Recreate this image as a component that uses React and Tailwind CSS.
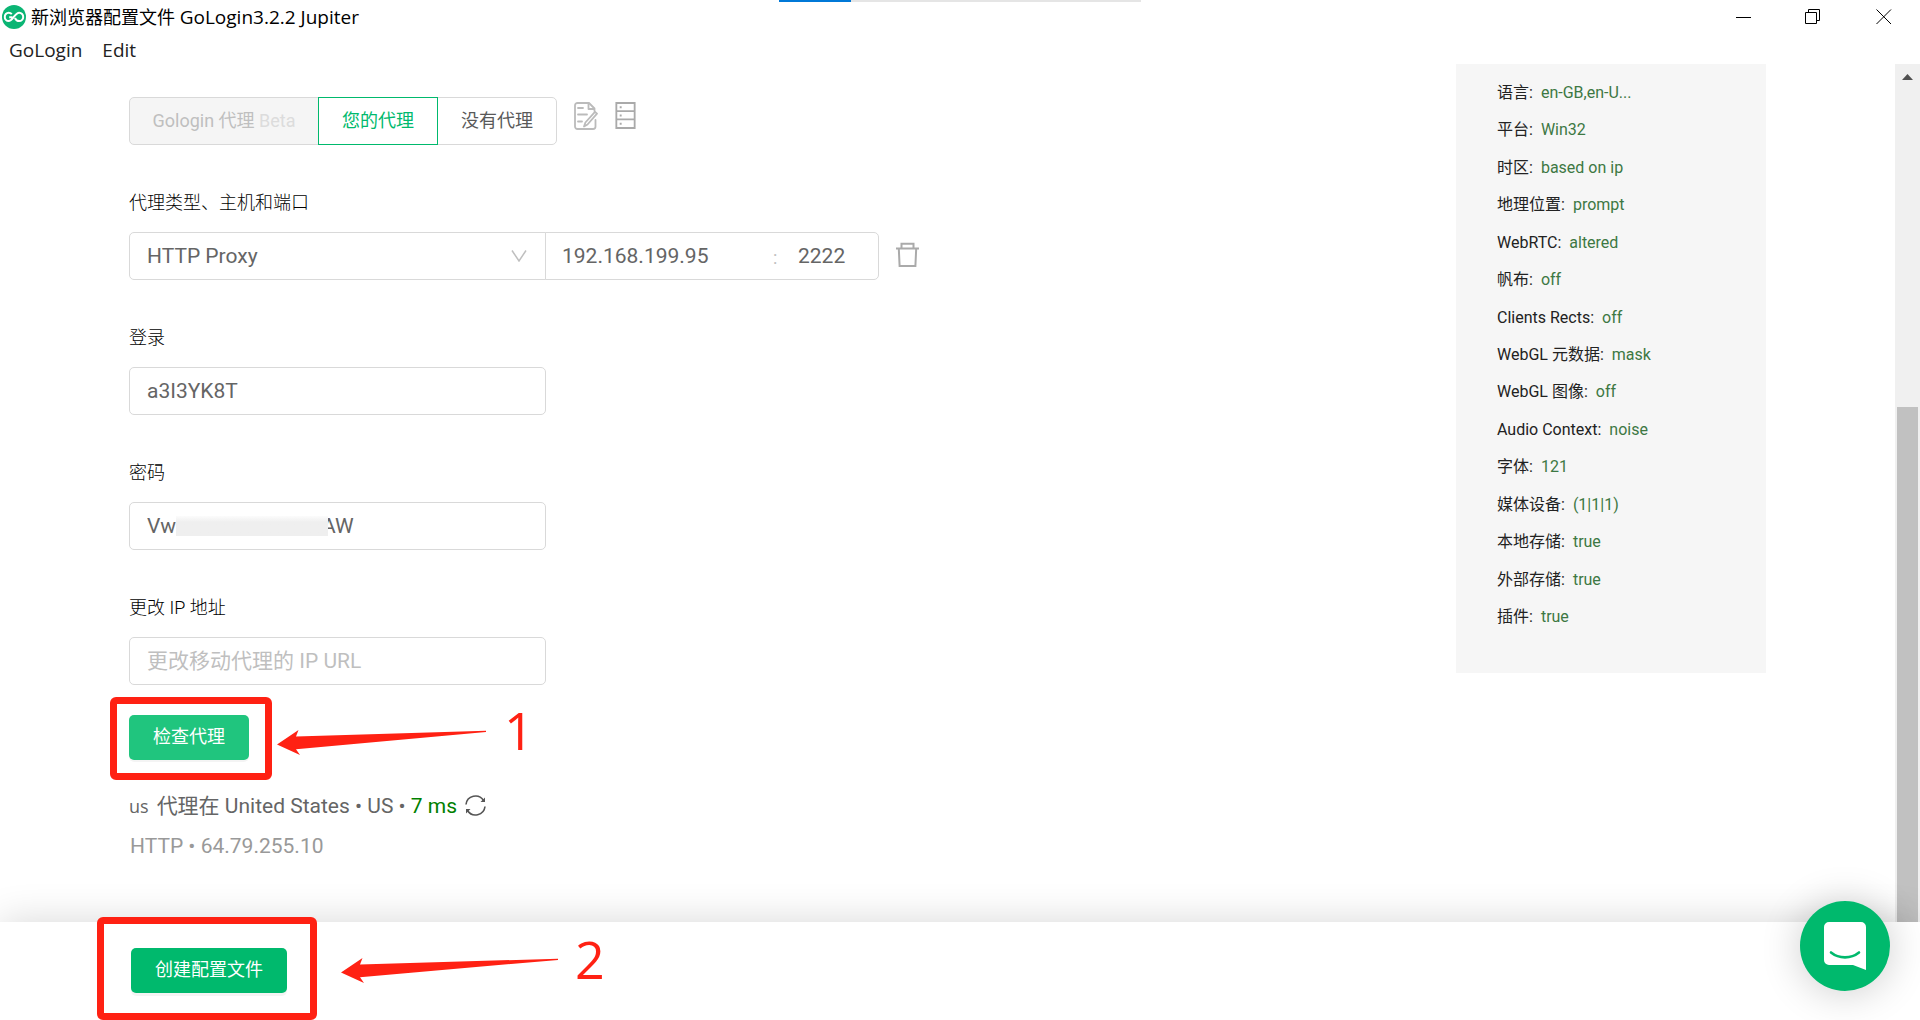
import { useState } from "react";

const params = [
  ["语言", "en-GB,en-U..."],
  ["平台", "Win32"],
  ["时区", "based on ip"],
  ["地理位置", "prompt"],
  ["WebRTC", "altered"],
  ["帆布", "off"],
  ["Clients Rects", "off"],
  ["WebGL 元数据", "mask"],
  ["WebGL 图像", "off"],
  ["Audio Context", "noise"],
  ["字体", "121"],
  ["媒体设备", "(1|1|1)"],
  ["本地存储", "true"],
  ["外部存储", "true"],
  ["插件", "true"],
];

const inputClass =
  "h-12 w-full rounded-[5px] border border-[#d9d9d9] bg-white px-[17px] text-[21px] text-[#656565] outline-none placeholder:text-[#bfbfbf]";

function TitleBar() {
  return (
    <header className="relative font-['Open_Sans','Noto_Sans_CJK_SC',sans-serif] text-[18px] text-black">
      {/* Loading line */}
      <div className="absolute top-0 left-[779px] flex h-[2px] w-[362px] bg-[#e5e5e5]">
        <div className="w-1/5 bg-[#0078d7]" />
      </div>

      <div className="flex h-[34px] items-center justify-between pl-[2px]">
        <div className="flex items-center gap-[5px]">
          <svg className="size-6" viewBox="0 0 24 24" fill="none">
            <circle cx="12" cy="12" r="12" fill="#0bb574" />
            <path
              d="M9.8 9.2C8.9 8.2 7.9 7.8 6.7 7.8A3.9 3.9 0 0 0 2.8 12a3.9 3.9 0 0 0 3.9 4.1c3.8 0 6.200-8.300 10.500-8.300a4 4 0 0 1 4 4.200 4 4 0 0 1-4 4.100c-2.300 0-3.700-1.800-4.300-3.100M7.200 12.200h3.200"
              stroke="#fff"
              strokeWidth="2"
            />
          </svg>
          <h1>
            新浏览器配置文件 <span className="text-[19px]">GoLogin3.2.2 Jupiter</span>
          </h1>
        </div>
        <div className="flex gap-[53px] pr-[28px]">
          <button type="button" aria-label="Minimize">
            <svg className="size-4" viewBox="0 0 16 16" stroke="#000" fill="none">
              <path d="M0 8.500h15" />
            </svg>
          </button>
          <button type="button" aria-label="Restore">
            <svg className="size-4" viewBox="0 0 16 16" stroke="#000" fill="none">
              <path d="M.5 3.500h11v11H.5zM3.500 3.500v-3h11v11h-3" />
            </svg>
          </button>
          <button type="button" aria-label="Close">
            <svg className="ml-[2px] size-4" viewBox="0 0 16 16" stroke="#000" fill="none">
              <path d="M.5.5l14.500 14.500M15 .5L.5 15" />
            </svg>
          </button>
        </div>
      </div>

      <nav className="flex h-[30px] items-center gap-5 pt-[2px] pl-[9px] text-[19px] text-[#222]">
        <button type="button">GoLogin</button>
        <button type="button">Edit</button>
      </nav>
    </header>
  );
}

function Arrow({ length, className }) {
  return (
    <svg
      className={className}
      width={length}
      height="25"
      viewBox={`0 0 ${length} 25`}
      fill="#ff2113"
    >
      <path d={`M0 14.500L21.500 0l-2.500 6.500L${length} .7v1.200L19 19.300 23 25z`} />
    </svg>
  );
}

function Field({ id, label, children }) {
  return (
    <div className="flex flex-col gap-[14px]">
      <label htmlFor={id} className="text-[18px] leading-[30px] font-light text-black">
        {label}
      </label>
      {children}
    </div>
  );
}

function ProxyTabs() {
  const [tab, setTab] = useState("own");
  const active = "border-[#00b96d] text-[#00b96d] z-10";
  const idle = "border-[#d9d9d9] text-[#595959]";

  return (
    <div className="flex items-start">
      <div className="flex h-12 text-[18px]">
        <button
          type="button"
          disabled
          className="w-[190px] rounded-l-[5px] border border-[#d9d9d9] bg-[#f5f5f5] pb-[2px] text-[#bfbfbf]"
        >
          Gologin 代理 <span className="text-[#dcdcdc]">Beta</span>
        </button>
        <button
          type="button"
          onClick={() => setTab("own")}
          className={`relative -ml-px w-[120px] border pb-[2px] ${tab === "own" ? active : idle}`}
        >
          您的代理
        </button>
        <button
          type="button"
          onClick={() => setTab("none")}
          className={`relative -ml-px w-[120px] rounded-r-[5px] border pb-[2px] ${tab === "none" ? active : idle}`}
        >
          没有代理
        </button>
      </div>

      <button type="button" aria-label="Edit proxies" className="mt-[5px] ml-[17px]">
        <svg className="h-7 w-6" viewBox="0 0 24 28" fill="none" stroke="#bbb" strokeWidth="1.800" strokeLinejoin="round" strokeLinecap="round">
          <path d="M20.500 9V6.500L15 1H3.500A2.500 2.500 0 0 0 1 3.500v21A2.500 2.500 0 0 0 3.500 27h15.500a2.500 2.500 0 0 0 2.500-2.500V18" />
          <path d="M14.500 1.500V7h5.500M4 6h5M4 12.500h9M4 19.500h4" />
          <path d="M21 9.800l2 1.900L13.500 22.500l-3.500 2 1.400-4z" />
        </svg>
      </button>
      <button type="button" aria-label="Proxy list" className="mt-[5px] ml-[17px]">
        <svg className="h-[27px] w-[21px]" viewBox="0 0 21 28" fill="none" stroke="#aaa" strokeWidth="1.900">
          <path d="M1 1h19v26H1zM1 9.500h19M1 18h19" />
          <path d="M4.500 5.500h2M4.500 14h2M4.500 22.500h2" strokeWidth="2" />
        </svg>
      </button>
    </div>
  );
}

function ProxyForm() {
  const [type, setType] = useState("http");
  const [host, setHost] = useState("192.168.199.95");
  const [port, setPort] = useState("2222");
  const [login, setLogin] = useState("a3I3YK8T");
  const [password, setPassword] = useState("Vw" + "\u00a0".repeat(28) + "AW");
  const [changeUrl, setChangeUrl] = useState("");

  return (
    <form className="pt-[33px]" onSubmit={(e) => e.preventDefault()}>
      <div className="flex flex-col gap-[43px]">
        <ProxyTabs />

        <Field id="proxy-type" label="代理类型、主机和端口">
          <div className="flex items-center">
            <div className="relative w-[417px]">
              <select
                id="proxy-type"
                value={type}
                onChange={(e) => setType(e.target.value)}
                className={`${inputClass} appearance-none rounded-r-none pt-[2px]`}
              >
                <option value="http">HTTP Proxy</option>
                <option value="socks5">Socks 5 Proxy</option>
              </select>
              <svg className="pointer-events-none absolute top-[18px] right-[19px] h-3 w-4" viewBox="0 0 16 12" fill="none" stroke="#bfbfbf" strokeWidth="1.500">
                <path d="M1 .5l7 10.500 7-10.500" />
              </svg>
            </div>
            <div className="-ml-px flex h-12 w-[334px] items-center rounded-r-[5px] border border-[#d9d9d9] pt-[2px] text-[21px] text-[#656565]">
              <input
                aria-label="Host"
                value={host}
                onChange={(e) => setHost(e.target.value)}
                className="w-[227px] pl-4 outline-none"
              />
              <span className="w-[25px] text-[18px] text-[#bfbfbf]">:</span>
              <input
                aria-label="Port"
                value={port}
                onChange={(e) => setPort(e.target.value)}
                className="w-[70px] outline-none"
              />
            </div>
            <button type="button" aria-label="Delete proxy" className="ml-[17px] pb-[2px]">
              <svg className="h-[26px] w-6" viewBox="0 0 24 26" fill="none" stroke="#aaa" strokeWidth="2">
                <path d="M0 6.500h23M5.500 6.500V1.800h12v4.700M2.800 6.500l.8 17.500h15.800l.8-17.500" />
              </svg>
            </button>
          </div>
        </Field>

        <Field id="login" label="登录">
          <div className="w-[417px]">
            <input id="login" value={login} onChange={(e) => setLogin(e.target.value)} className={inputClass} />
          </div>
        </Field>

        <Field id="password" label="密码">
          <div className="relative w-[417px]">
            <input id="password" value={password} onChange={(e) => setPassword(e.target.value)} className={inputClass} />
            {/* Hidden middle part */}
            <div className="pointer-events-none absolute top-[14px] left-[47px] h-5 w-[152px] bg-linear-to-b from-[#fcfcfc] to-[#efefef] to-30%" />
          </div>
        </Field>

        <Field id="change-url" label="更改 IP 地址">
          <div className="w-[417px]">
            <input
              id="change-url"
              placeholder="更改移动代理的 IP URL"
              value={changeUrl}
              onChange={(e) => setChangeUrl(e.target.value)}
              className={inputClass}
            />
          </div>
        </Field>
      </div>

      {/* Check proxy */}
      <div className="relative mt-[30px] w-[120px]">
        <button
          type="button"
          className="h-[45px] w-full rounded-[5px] bg-[#20c57e] pb-[2px] text-[18px] text-white shadow-[0_2px_0_rgba(0,0,0,0.045)]"
        >
          检查代理
        </button>
        <div className="pointer-events-none absolute -top-[18px] -right-[23px] -bottom-5 -left-[19px] rounded-md border-7 border-[#ff2113]" />
        <Arrow length={209} className="absolute top-[15px] left-[148px] max-w-none" />
        <span className="absolute -top-5 left-[375px] font-['Open_Sans',sans-serif] text-[52px] leading-[70px] text-[#ff2113]">
          1
        </span>
      </div>

      {/* Proxy status */}
      <div className="mt-[26px] text-[21px] leading-10">
        <p className="flex items-center text-[#656565]">
          <span className="mr-2 font-['Open_Sans',sans-serif] text-[18px]">us</span>
          代理在 United States • US •
          <span className="ml-[5px] text-[#008000]">7 ms</span>
          <button type="button" aria-label="Refresh" className="ml-2 pb-[2px]">
            <svg className="size-[21px]" viewBox="0 0 21 21" fill="none" stroke="#555" strokeWidth="1.600">
              <path d="M1 9.500A9.500 9.500 0 0 1 18.500 5.500M20 11.500A9.500 9.500 0 0 1 2.500 15.500" />
              <path d="M20 2.500v4.500h-4.500zM1 18.500V14h4.500z" fill="#555" stroke="none" />
            </svg>
          </button>
        </p>
        <p className="pl-px text-[#999]">HTTP • 64.79.255.10</p>
      </div>
    </form>
  );
}

function ScrollBar() {
  return (
    <div className="flex w-[25px] shrink-0 flex-col justify-between bg-[#f0f0f0] px-[2px]">
      <svg className="mx-auto mt-[10px] h-[6px] w-[11px]" viewBox="0 0 11 6">
        <path d="M0 6L5.500 0 11 6z" fill="#505050" />
      </svg>
      <div className="h-3/5 bg-[#c1c1c1]" />
    </div>
  );
}

export default function App() {
  return (
    <div className="flex min-h-screen flex-col overflow-hidden bg-white font-[Roboto,'Noto_Sans_CJK_SC',sans-serif]">
      <TitleBar />

      <main className="flex flex-1">
        <div className="flex flex-1 items-start justify-between px-[129px]">
          <ProxyForm />

          {/* Profile overview */}
          <aside className="w-[310px] bg-[#f6f6f6] pt-[10px] pb-[37px] pl-[41px]">
            <ul className="grid min-h-[562px] items-center text-[16px]">
              {params.map(([name, value]) => (
                <li key={name} className="flex items-baseline gap-2">
                  <span className="text-[#222]">{name}:</span>
                  <span className="text-[#3d7843]">{value}</span>
                </li>
              ))}
            </ul>
          </aside>
        </div>
        <ScrollBar />
      </main>

      <footer className="relative h-[98px] bg-white pt-[26px] pl-[131px] shadow-[0_0_40px_rgba(0,0,0,0.16)]">
        <div className="relative w-[156px]">
          <button
            type="button"
            className="h-[45px] w-full rounded-[5px] bg-[#00b96d] pb-[2px] text-[18px] text-white shadow-[0_3px_0_rgba(0,0,0,0.045)]"
          >
            创建配置文件
          </button>
          <div className="pointer-events-none absolute -top-[31px] -right-[30px] -bottom-[27px] -left-[34px] rounded-md border-7 border-[#ff2113]" />
          <Arrow length={217} className="absolute top-[10px] left-[210px] max-w-none" />
          <span className="absolute -top-6 left-[444px] font-['Open_Sans',sans-serif] text-[52px] leading-[70px] text-[#ff2113]">
            2
          </span>
        </div>
      </footer>

      {/* Support chat */}
      <button
        type="button"
        aria-label="Open chat"
        className="fixed right-[30px] bottom-[29px] flex size-[90px] items-center justify-center rounded-full bg-[#00b96d] shadow-[0_2px_40px_rgba(0,0,0,0.2)]"
      >
        <svg className="h-12 w-[42px]" viewBox="0 0 42 48" fill="none">
          <path d="M5 0h32a5 5 0 0 1 5 5v43l-13-5H5a5 5 0 0 1-5-5V5a5 5 0 0 1 5-5z" fill="#fff" />
          <path d="M7 30.500c8 6.500 20 6.500 28 0" stroke="#00b96d" strokeWidth="2.600" strokeLinecap="round" />
        </svg>
      </button>
    </div>
  );
}
